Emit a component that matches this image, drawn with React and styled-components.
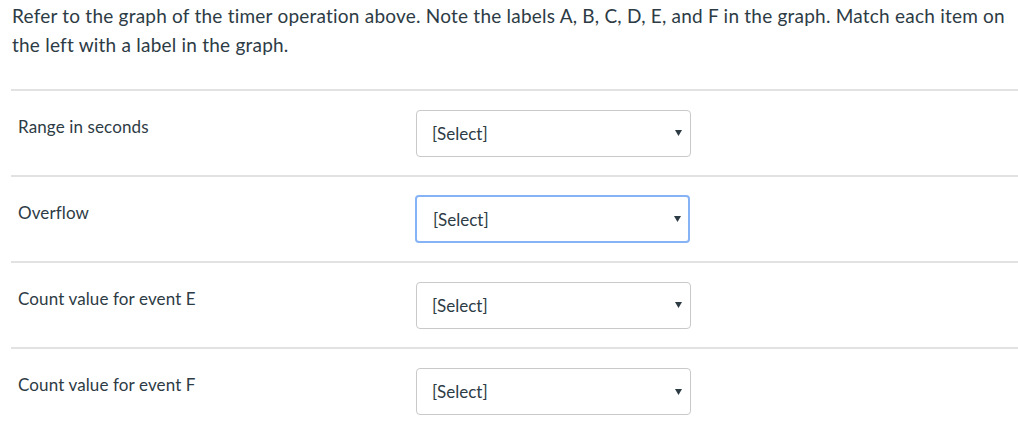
import React from 'react';
import styled, { createGlobalStyle } from "styled-components";

const GlobalStyle = createGlobalStyle`
    body {
        margin: 0;
        background: #ffffff;
        font-family: Lato, "Liberation Sans", sans-serif;
        color: #2d3b45;
    }
`;

const items = [
    { label: "Range in seconds" },
    { label: "Overflow", focused: true },
    { label: "Count value for event E" },
    { label: "Count value for event F" },
];

export default function App() {
    return (
        <Page>
            <GlobalStyle />
            <Question>
                Refer to the graph of the timer operation above. Note the labels A, B, C, D, E, and F in the graph. Match each item on the left with a label in the graph.
            </Question>
            <MatchList>
                {items.map((item) => (
                    <MatchRow key={item.label}>
                        <Label>{item.label}</Label>
                        <SelectBox focused={item.focused}>
                            <span>[Select]</span>
                            <svg width="7" height="6" viewBox="0 0 7 6">
                                <path d="M0 0 H7 L3.5 6 Z" fill="#2d3b45" />
                            </svg>
                        </SelectBox>
                    </MatchRow>
                ))}
            </MatchList>
        </Page>
    );
}

const Page = styled.div`
    padding: 1px 0 0 11px;
`;

const Question = styled.div`
    font-size: 19px;
    line-height: 29px;
    letter-spacing: 0.22px;
    padding: 0 8px 0 1px;
    color: #2d3b45;
`;

const MatchList = styled.div`
    margin-top: 30px;
`;

const MatchRow = styled.div`
    display: flex;
    align-items: center;
    height: 86px;
    border-top: 2px solid #e2e2e2;
    box-sizing: border-box;
    &:last-child {
        height: 87px;
    }
`;

const Label = styled.div`
    width: 398px;
    padding-left: 7px;
    margin-bottom: 14px;
    font-size: 17px;
    letter-spacing: 0.12px;
    color: #2d3b45;
`;

const SelectBox = styled.div`
    display: flex;
    align-items: center;
    justify-content: space-between;
    box-sizing: border-box;
    width: 275px;
    height: ${(p) => (p.focused ? "48px" : "47px")};
    margin-left: ${(p) => (p.focused ? "-1px" : "0")};
    padding: 0 ${(p) => (p.focused ? "7px" : "8px")} 0 ${(p) => (p.focused ? "16px" : "15px")};
    border: ${(p) => (p.focused ? "2px solid #86b3f5" : "1px solid #c9c9c9")};
    border-radius: 4px;
    background: #ffffff;
    font-size: 17px;
    color: #2d3b45;
`;
